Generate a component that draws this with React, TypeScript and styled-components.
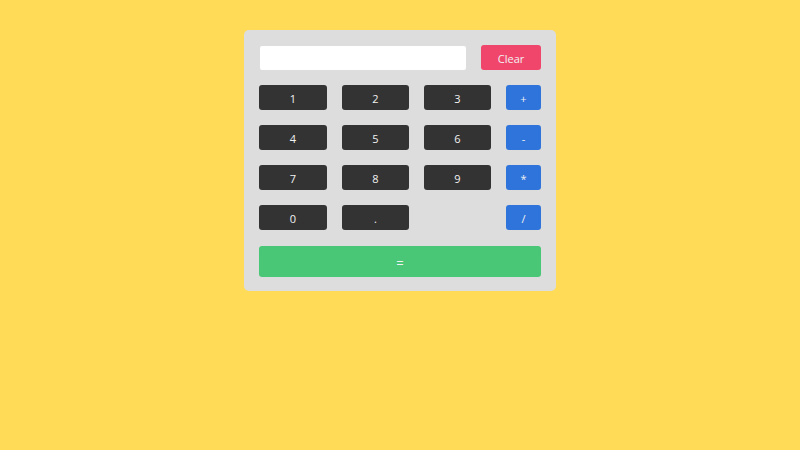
import { useState } from "react";
import styled, { createGlobalStyle } from "styled-components";

const GlobalStyle = createGlobalStyle`
  body {
    margin: 0;
    background-color: #ffdb58;
    font-family: "Open Sans", "Noto Sans", sans-serif;
  }
`;

const Page = styled.div`
  display: flex;
  justify-content: center;
  padding-top: 30px;
`;

const Calculator = styled.div`
  width: 282px;
  padding: 15px 15px 14px 15px;
  background-color: #dddddd;
  border-radius: 5px;
  display: flex;
  flex-direction: column;
  gap: 15px;
`;

const TopRow = styled.div`
  display: grid;
  grid-template-columns: 207px 60px;
  gap: 15px;
  align-items: end;
`;

const Display = styled.input`
  box-sizing: border-box;
  height: 24px;
  width: 206px;
  margin-left: 1px;
  border: none;
  border-radius: 2px;
  background: #fff;
  padding: 0 8px;
  font: inherit;
  font-size: 14px;
  outline: none;
`;

const Keys = styled.div`
  display: grid;
  grid-template-columns: 68px 67px 67px 35px;
  grid-auto-rows: 25px;
  column-gap: 15px;
  row-gap: 15px;
  margin-bottom: 1px;
`;

const colors = {
  digit: "#333333",
  op: "#2f74da",
  clear: "#f0466b",
  equals: "#4ac776",
};

const Key = styled.button<{ $kind: keyof typeof colors; $col?: number }>`
  height: 25px;
  border: none;
  border-radius: 3px;
  background-color: ${(p) => colors[p.$kind]};
  color: #f2f2f2;
  font-family: "Open Sans", "Noto Sans", sans-serif;
  font-size: 11px;
  cursor: pointer;
  padding: 2px 0 0;
  ${(p) => (p.$col ? `grid-column: ${p.$col};` : "")}
`;

const EqualsKey = styled(Key)`
  height: 31px;
  width: 100%;
  font-size: 13px;
`;

const rows = [
  ["1", "2", "3", "+"],
  ["4", "5", "6", "-"],
  ["7", "8", "9", "*"],
  ["0", ".", null, "/"],
];

export default function App() {
  const [value, setValue] = useState("");

  const press = (k: string) => setValue((v) => v + k);

  const calc = () => {
    try {
      // eslint-disable-next-line no-new-func
      setValue(String(Function(`return (${value})`)()));
    } catch {
      setValue("");
    }
  };

  return (
    <>
      <GlobalStyle />
      <Page>
        <Calculator>
          <TopRow>
            <Display value={value} readOnly />
            <Key $kind="clear" onClick={() => setValue("")}>
              Clear
            </Key>
          </TopRow>
          <Keys>
            {rows.map((row) =>
              row.map((k, i) =>
                k === null ? null : (
                  <Key
                    key={k}
                    $kind={i === 3 ? "op" : "digit"}
                    $col={i + 1}
                    onClick={() => press(k)}
                  >
                    {k}
                  </Key>
                )
              )
            )}
          </Keys>
          <EqualsKey $kind="equals" onClick={calc}>
            =
          </EqualsKey>
        </Calculator>
      </Page>
    </>
  );
}
